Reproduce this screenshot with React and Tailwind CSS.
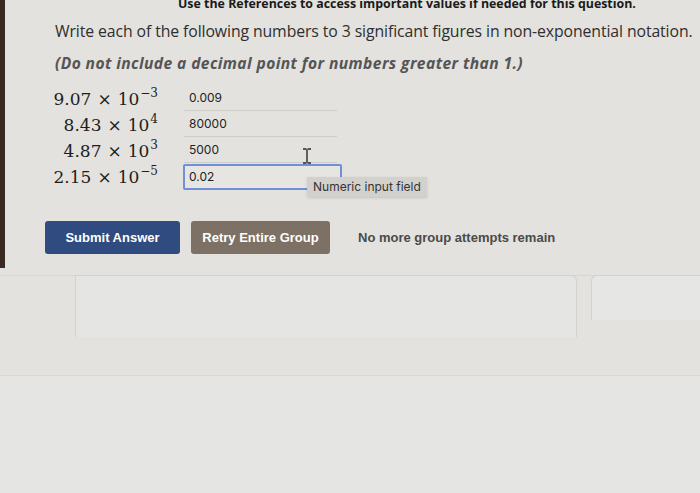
import React from "react"

const rows = [
    { m: "9.07", e: "−3", v: "0.009" },
    { m: "8.43", e: "4", v: "80000" },
    { m: "4.87", e: "3", v: "5000" },
    { m: "2.15", e: "−5", v: "0.02", focus: true },
]

function Sci({ m, e }) {
    return (
        <div className="flex items-start justify-end h-[26px] text-[17px] text-[#1e1e1e] leading-[26px]" style={{ fontFamily: "'DejaVu Serif', 'Liberation Serif', serif" }}>
            <span>{m}</span>
            <span className="mx-[6px]">×</span>
            <span>10</span>
            <span className="text-[12px] leading-none mt-[1px] ml-[1px]">{e}</span>
        </div>
    )
}

export default function App() {
    return (
        <div className="relative w-[700px] h-[493px] overflow-hidden bg-[#e3e2de]" style={{ fontFamily: "'Open Sans', 'Liberation Sans', sans-serif" }}>
            <div className="absolute left-0 top-0 w-[5px] h-[268px] bg-[#3a2a22]" />

            <div className="pl-[178px] -mt-[5px] text-[12.4px] font-bold text-[#1a1a1a] leading-[18px]">
                Use the References to access important values if needed for this question.
            </div>

            <div className="pl-[55px] pt-[6px] text-[15.8px] text-[#2e2e2e] leading-[24px] tracking-[-0.1px]">
                Write each of the following numbers to 3 significant figures in non-exponential notation.
            </div>
            <div className="pl-[55px] pt-[8px] text-[15.6px] italic font-bold text-[#555] leading-[24px] tracking-[0.4px]">
                (Do not include a decimal point for numbers greater than 1.)
            </div>

            <div className="flex pl-[52px] pt-[10px] gap-[26px]">
                <div className="flex flex-col w-[106px] pt-[1px]">
                    {rows.map((r) => (
                        <Sci key={r.m} m={r.m} e={r.e} />
                    ))}
                </div>
                <div className="flex flex-col w-[158px]" style={{ fontFamily: "Inter, 'Liberation Sans', sans-serif" }}>
                    {rows.map((r) =>
                        r.focus ? (
                            <div key={r.v} className="relative h-[26px] -ml-[1px] mt-[1px] border-2 border-[#6f8fd6] rounded-[2px] bg-[#e6e5e1] pl-[4px] text-[12px] text-[#222] leading-[22px]">
                                {r.v}
                                <div className="absolute left-[122px] top-[11px] bg-[#d3d1cc] px-[6px] py-[2px] text-[12px] text-[#333] whitespace-nowrap leading-[16px] shadow-sm">
                                    Numeric input field
                                </div>
                            </div>
                        ) : (
                            <div key={r.v} className="h-[26px] w-[153px] border-b border-[#cfcdc8] pl-[5px] text-[12px] text-[#222] leading-[26px]">
                                {r.v}
                            </div>
                        )
                    )}
                </div>
            </div>

            <div className="absolute left-[300px] top-[148px] w-[14px] h-[16px] text-[#333]">
                <svg viewBox="0 0 14 16" width="14" height="16">
                    <path d="M3 1h3.5M7.5 1H11M7 1.5v13M3 15h3.5M7.5 15H11" stroke="#2a2a2a" strokeWidth="1.4" fill="none" />
                </svg>
            </div>

            <div className="flex items-center pl-[45px] pt-[31px] gap-[11px] text-[13px] font-bold" style={{ fontFamily: "'Liberation Sans', Arial, sans-serif" }}>
                <button className="w-[135px] h-[33px] rounded-[3px] bg-[#2f4b80] text-white">Submit Answer</button>
                <button className="w-[139px] h-[33px] rounded-[3px] bg-[#7d7165] text-white">Retry Entire Group</button>
                <span className="ml-[17px] text-[#4a4a4a]">No more group attempts remain</span>
            </div>

            <div className="mt-[21px] border-t border-[#d7d6d1]">
                <div className="flex gap-[14px] pl-[75px]">
                    <div className="w-[502px] h-[62px] -mt-px border-t border-r border-l border-[#d2d1cc] rounded-tr-[6px] bg-[#e5e5e3]" />
                    <div className="flex-1 h-[45px] -mt-px border-t border-l border-[#d2d1cc] rounded-tl-[6px] bg-[#e6e6e4]" />
                </div>
                <div className="mt-[38px] border-t border-[#dad9d5] h-[120px] bg-[#e5e5e3]" />
            </div>
        </div>
    )
}
